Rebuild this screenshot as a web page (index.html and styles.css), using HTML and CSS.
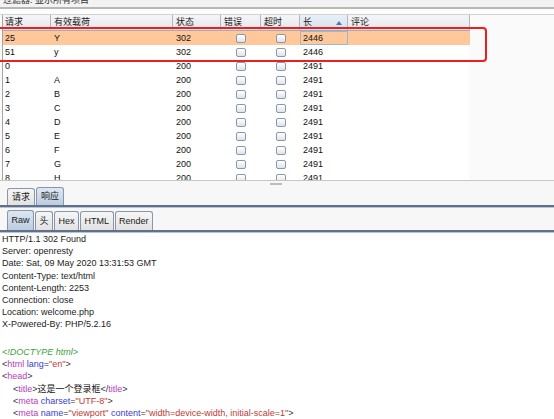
FILE: index.html
```html
<!DOCTYPE html>
<html lang="zh">
<head>
<meta charset="UTF-8">
<title>Intruder results</title>
<link rel="stylesheet" href="styles.css">
</head>
<body>
<div class="filter"><span class="filter-text">过滤器: 显示所有项目</span></div>
<div class="gap"></div>
<div class="results">
  <div class="grid">
    <div class="hc">请求</div>
    <div class="hc">有效载荷</div>
    <div class="hc">状态</div>
    <div class="hc">错误</div>
    <div class="hc">超时</div>
    <div class="hc sorted">长<span class="arrow"></span></div>
    <div class="hc">评论</div>

    <div class="c hl">25</div><div class="c hl">Y</div><div class="c hl">302</div><div class="c hl cb"><span class="box"></span></div><div class="c hl cb"><span class="box"></span></div><div class="c hl sel">2446</div><div class="c hl"></div>
    <div class="c">51</div><div class="c">y</div><div class="c">302</div><div class="c cb"><span class="box"></span></div><div class="c cb"><span class="box"></span></div><div class="c">2446</div><div class="c"></div>
    <div class="c">0</div><div class="c"></div><div class="c">200</div><div class="c cb"><span class="box"></span></div><div class="c cb"><span class="box"></span></div><div class="c">2491</div><div class="c"></div>
    <div class="c">1</div><div class="c">A</div><div class="c">200</div><div class="c cb"><span class="box"></span></div><div class="c cb"><span class="box"></span></div><div class="c">2491</div><div class="c"></div>
    <div class="c">2</div><div class="c">B</div><div class="c">200</div><div class="c cb"><span class="box"></span></div><div class="c cb"><span class="box"></span></div><div class="c">2491</div><div class="c"></div>
    <div class="c">3</div><div class="c">C</div><div class="c">200</div><div class="c cb"><span class="box"></span></div><div class="c cb"><span class="box"></span></div><div class="c">2491</div><div class="c"></div>
    <div class="c">4</div><div class="c">D</div><div class="c">200</div><div class="c cb"><span class="box"></span></div><div class="c cb"><span class="box"></span></div><div class="c">2491</div><div class="c"></div>
    <div class="c">5</div><div class="c">E</div><div class="c">200</div><div class="c cb"><span class="box"></span></div><div class="c cb"><span class="box"></span></div><div class="c">2491</div><div class="c"></div>
    <div class="c">6</div><div class="c">F</div><div class="c">200</div><div class="c cb"><span class="box"></span></div><div class="c cb"><span class="box"></span></div><div class="c">2491</div><div class="c"></div>
    <div class="c">7</div><div class="c">G</div><div class="c">200</div><div class="c cb"><span class="box"></span></div><div class="c cb"><span class="box"></span></div><div class="c">2491</div><div class="c"></div>
    <div class="c">8</div><div class="c">H</div><div class="c">200</div><div class="c cb"><span class="box"></span></div><div class="c cb"><span class="box"></span></div><div class="c">2491</div><div class="c"></div>
  </div>
  <div class="redbox"></div>
</div>
<div class="splitter"><span class="grip"></span></div>
<div class="tabs tabs-top">
  <span class="tab">请求</span><span class="tab active">响应</span>
</div>
<div class="tabs tabs-sub">
  <span class="tab active">Raw</span><span class="tab">头</span><span class="tab">Hex</span><span class="tab">HTML</span><span class="tab">Render</span>
</div>
<div class="message">
  <div class="headers">
    <div class="ln">HTTP/1.1 302 Found</div>
    <div class="ln">Server: openresty</div>
    <div class="ln">Date: Sat, 09 May 2020 13:31:53 GMT</div>
    <div class="ln">Content-Type: text/html</div>
    <div class="ln">Content-Length: 2253</div>
    <div class="ln">Connection: close</div>
    <div class="ln">Location: welcome.php</div>
    <div class="ln">X-Powered-By: PHP/5.2.16</div>
  </div>
  <div class="code">
    <div class="ln doctype">&lt;!DOCTYPE html&gt;</div>
    <div class="ln"><span class="p">&lt;</span><span class="t">html</span> <span class="a">lang</span><span class="p">=</span><span class="v">"en"</span><span class="p">&gt;</span></div>
    <div class="ln"><span class="p">&lt;</span><span class="t">head</span><span class="p">&gt;</span></div>
    <div class="ln ind"><span class="p">&lt;</span><span class="t">title</span><span class="p">&gt;</span><span class="zh">这是一个登录框</span><span class="p">&lt;/</span><span class="t">title</span><span class="p">&gt;</span></div>
    <div class="ln ind"><span class="p">&lt;</span><span class="t">meta</span> <span class="a">charset</span><span class="p">=</span><span class="v">"UTF-8"</span><span class="p">&gt;</span></div>
    <div class="ln ind"><span class="p">&lt;</span><span class="t">meta</span> <span class="a">name</span><span class="p">=</span><span class="v">"viewport"</span> <span class="a">content</span><span class="p">=</span><span class="v">"width=device-width, initial-scale=1"</span><span class="p">&gt;</span></div>
  </div>
</div>
</body>
</html>
```

FILE: styles.css
```css
* { box-sizing: border-box; }
html, body {
  margin: 0;
  padding: 0;
  background: #ffffff;
  overflow: hidden;
}
body {
  width: 554px;
  height: 419px;
  font-family: "Liberation Sans", Arial, "Noto Sans CJK SC", sans-serif;
  font-size: 9px;
  color: #111;
}

.filter {
  height: 9px;
  background: #f2f2f2;
  border-bottom: 2px solid #b8b8b8;
  overflow: hidden;
  padding-left: 3px;
}
.filter-text {
  display: block;
  line-height: 9px;
  margin-top: -4px;
  color: #333;
}
.gap {
  height: 5px;
  background: #fdfdfd;
}

.results {
  position: relative;
  height: 167px;
  background: #fafafa;
  border-top: 1px solid #d2d2d2;
  border-bottom: 1px solid #c6c6c6;
  padding-left: 2px;
  overflow: hidden;
}
.grid {
  display: grid;
  grid-template-columns: 48px 122px 48px 40px 39px 48px 122px;
  grid-auto-rows: 14px;
  grid-template-rows: 16px;
  width: 467px;
  background: #ffffff;
  border-left: 1px solid #a4a4a4;
  height: 165px;
}
.hc {
  background: linear-gradient(#f5f6f8, #e3e6eb);
  border-right: 1px solid #b0b7c2;
  border-bottom: 1px solid #a2aab6;
  padding-left: 3px;
  line-height: 15px;
  color: #1a1a1a;
  position: relative;
}
.hc:first-child { padding-left: 2px; }
.hc.sorted { background: linear-gradient(#e9f0f8, #d3e0ee); }
.arrow {
  position: absolute;
  right: 5px;
  top: 6px;
  width: 0;
  height: 0;
  border-left: 3px solid transparent;
  border-right: 3px solid transparent;
  border-bottom: 4px solid #4a78b0;
}
.c {
  padding-left: 3px;
  line-height: 14px;
  white-space: nowrap;
}
.c:nth-child(7n+1) { padding-left: 2px; }
.hl { background: #ffc89a; }
.sel { border: 1px solid #9fb6d2; padding-left: 2px; line-height: 12px; }
.cb {
  display: flex;
  align-items: center;
  justify-content: center;
  padding-left: 0;
}
.box {
  width: 10px;
  height: 9px;
  border: 1px solid #8d98a6;
  border-radius: 2px;
  background: linear-gradient(#ffffff, #dfe3e8);
}

.redbox {
  position: absolute;
  left: -6px;
  top: 12px;
  width: 493px;
  height: 35px;
  border: 2px solid #f01d1d;
  border-radius: 4px;
}

.splitter {
  height: 7px;
  background: #f7f7f7;
  position: relative;
}
.grip {
  position: absolute;
  left: 270px;
  top: 2px;
  width: 12px;
  height: 2px;
  background: #bdbdbd;
}

.tabs {
  display: flex;
  align-items: flex-end;
  gap: 1px;
  padding-left: 7px;
  background: #f7f7f7;
  border-bottom: 2px solid #617189;
  box-shadow: 0 1px 0 #b7c4d5;
  position: relative;
}
.tabs-top { height: 19px; }
.tabs-sub { height: 24px; margin-top: 1px; }
.tab {
  height: 17px;
  padding: 0 4px;
  line-height: 16px;
  border: 1px solid #8796aa;
  border-bottom: none;
  border-radius: 3px 3px 0 0;
  background: linear-gradient(#f6f6f6, #e2e2e2);
  color: #1a1a1a;
}
.tabs-sub .tab { height: 19px; line-height: 18px; padding: 0 3.5px; }
.tab.active {
  background: linear-gradient(#dde7f2, #bccde0);
  height: 18px;
}
.tabs-sub .tab.active { height: 20px; }

.message {
  padding: 1px 0 0 2px;
  background: #ffffff;
  color: #1c1c1c;
}
.ln {
  line-height: 12.2px;
  white-space: pre;
}
.headers { margin-bottom: 15px; }
.code .ln { line-height: 12.3px; }
.doctype { color: #3aa33a; font-style: italic; }
.ind { padding-left: 11px; }
.p { color: #333333; }
.t { color: #b83cc0; }
.a { color: #3a3ed0; }
.v { color: #c03a32; }
.zh { font-family: "Noto Sans CJK SC", serif; color: #111; }
```
